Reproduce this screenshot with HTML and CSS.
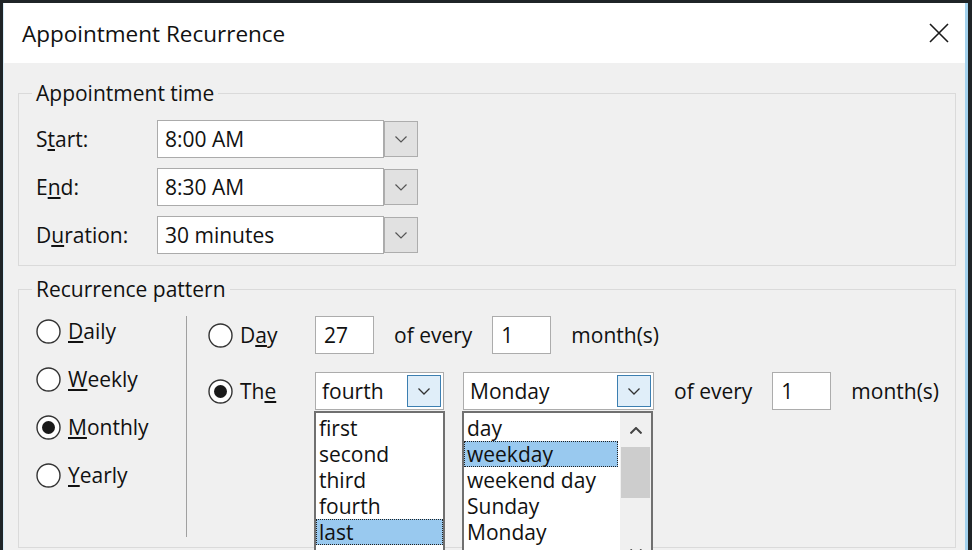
FILE: index.html
```html
<!DOCTYPE html>
<html lang="en">
<head>
  <meta charset="UTF-8">
  <meta name="viewport" content="width=device-width, initial-scale=1.0">
  <title>Appointment Recurrence</title>
  <link rel="stylesheet" href="styles.css">
</head>
<body>
  <div class="window">
    <div class="titlebar">
      <span class="title">Appointment Recurrence</span>
      <span class="close-btn">
        <svg width="20" height="20" viewBox="0 0 20 20"><path d="M1 1L19 19M19 1L1 19" stroke="#1a1a1a" stroke-width="1.6" fill="none"/></svg>
      </span>
    </div>

    <div class="content">
      <fieldset class="group time-group">
        <legend>Appointment time</legend>
        <div class="time-row">
          <label class="time-label">S<u>t</u>art:</label>
          <div class="time-box">8:00 AM</div>
          <div class="drop-btn">
            <svg width="12" height="7" viewBox="0 0 12 7"><path d="M0.5 0.5L6 6L11.5 0.5" stroke="#555" stroke-width="1.2" fill="none"/></svg>
          </div>
        </div>
        <div class="time-row">
          <label class="time-label">E<u>n</u>d:</label>
          <div class="time-box">8:30 AM</div>
          <div class="drop-btn">
            <svg width="12" height="7" viewBox="0 0 12 7"><path d="M0.5 0.5L6 6L11.5 0.5" stroke="#555" stroke-width="1.2" fill="none"/></svg>
          </div>
        </div>
        <div class="time-row">
          <label class="time-label">D<u>u</u>ration:</label>
          <div class="time-box">30 minutes</div>
          <div class="drop-btn">
            <svg width="12" height="7" viewBox="0 0 12 7"><path d="M0.5 0.5L6 6L11.5 0.5" stroke="#555" stroke-width="1.2" fill="none"/></svg>
          </div>
        </div>
      </fieldset>

      <fieldset class="group pattern-group">
        <legend>Recurrence pattern</legend>
        <div class="pattern">
          <div class="freq">
            <div class="opt">
              <svg class="radio" width="25" height="25" viewBox="0 0 25 25"><circle cx="12.5" cy="12.5" r="11.5" fill="#fff" stroke="#333" stroke-width="1.4"/></svg>
              <span><u>D</u>aily</span>
            </div>
            <div class="opt">
              <svg class="radio" width="25" height="25" viewBox="0 0 25 25"><circle cx="12.5" cy="12.5" r="11.5" fill="#fff" stroke="#333" stroke-width="1.4"/></svg>
              <span><u>W</u>eekly</span>
            </div>
            <div class="opt">
              <svg class="radio" width="25" height="25" viewBox="0 0 25 25"><circle cx="12.5" cy="12.5" r="11.5" fill="#fff" stroke="#333" stroke-width="1.4"/><circle cx="12.5" cy="12.5" r="6.5" fill="#1a1a1a"/></svg>
              <span><u>M</u>onthly</span>
            </div>
            <div class="opt">
              <svg class="radio" width="25" height="25" viewBox="0 0 25 25"><circle cx="12.5" cy="12.5" r="11.5" fill="#fff" stroke="#333" stroke-width="1.4"/></svg>
              <span><u>Y</u>early</span>
            </div>
          </div>

          <div class="monthly">
            <div class="month-row">
              <div class="opt opt-wide">
                <svg class="radio" width="25" height="25" viewBox="0 0 25 25"><circle cx="12.5" cy="12.5" r="11.5" fill="#fff" stroke="#333" stroke-width="1.4"/></svg>
                <span>D<u>a</u>y</span>
              </div>
              <div class="num-box">27</div>
              <span>of every</span>
              <div class="num-box">1</div>
              <span>month(s)</span>
            </div>

            <div class="month-row">
              <div class="opt opt-wide">
                <svg class="radio" width="25" height="25" viewBox="0 0 25 25"><circle cx="12.5" cy="12.5" r="11.5" fill="#fff" stroke="#333" stroke-width="1.4"/><circle cx="12.5" cy="12.5" r="6.5" fill="#1a1a1a"/></svg>
                <span>Th<u>e</u></span>
              </div>

              <div class="combo combo-ord">
                <span class="combo-text">fourth</span>
                <span class="combo-btn">
                  <svg width="12" height="7" viewBox="0 0 12 7"><path d="M0.5 0.5L6 6L11.5 0.5" stroke="#333" stroke-width="1.3" fill="none"/></svg>
                </span>
                <div class="droplist list-ord">
                  <ul>
                    <li>first</li>
                    <li>second</li>
                    <li>third</li>
                    <li>fourth</li>
                    <li class="selected">last</li>
                  </ul>
                </div>
              </div>

              <div class="combo combo-day">
                <span class="combo-text">Monday</span>
                <span class="combo-btn">
                  <svg width="12" height="7" viewBox="0 0 12 7"><path d="M0.5 0.5L6 6L11.5 0.5" stroke="#333" stroke-width="1.3" fill="none"/></svg>
                </span>
                <div class="droplist list-day">
                  <ul>
                    <li>day</li>
                    <li class="selected">weekday</li>
                    <li>weekend day</li>
                    <li>Sunday</li>
                    <li>Monday</li>
                  </ul>
                  <div class="scrollbar">
                    <div class="sb-btn">
                      <svg width="12" height="7" viewBox="0 0 12 7"><path d="M0.5 6.5L6 1L11.5 6.5" stroke="#444" stroke-width="2" fill="none"/></svg>
                    </div>
                    <div class="sb-track"><div class="sb-thumb"></div></div>
                    <div class="sb-btn">
                      <svg width="12" height="7" viewBox="0 0 12 7"><path d="M0.5 0.5L6 6L11.5 0.5" stroke="#444" stroke-width="2" fill="none"/></svg>
                    </div>
                  </div>
                </div>
              </div>

              <span>of every</span>
              <div class="num-box">1</div>
              <span>month(s)</span>
            </div>
          </div>
        </div>
      </fieldset>
    </div>
  </div>
</body>
</html>
```

FILE: styles.css
```css
html,
body {
  margin: 0;
  height: 550px;
  overflow: hidden;
}

body {
  font-family: "Open Sans", "Noto Sans", sans-serif;
  font-size: 21px;
  color: #111;
  background-color: #1f2427;
}

.window {
  margin: 3px 4px 0 3px;
  height: 547px;
  border-left: 1px solid #d6ecf8;
  border-right: 3px solid #a3d2ee;
  background-color: #f0f0f0;
}

/* Title bar */
.titlebar {
  height: 60px;
  display: flex;
  align-items: center;
  justify-content: space-between;
  padding: 0 16px 0 18px;
  background-color: #fff;
}

.title {
  font-size: 22.5px;
  color: #111;
}

.close-btn {
  display: flex;
  width: 20px;
  height: 20px;
}

/* Content */
.content {
  padding: 0 9px 0 14px;
}

.group {
  margin: 0;
  border: 1px solid #dadada;
  padding: 13px 8px 11px 17px;
  min-width: 0;
}

.group legend {
  margin-left: -4px;
  padding: 0 4px;
  line-height: 28px;
}

.time-group {
  margin-top: 16px;
}

.pattern-group {
  margin-top: 9px;
  padding-bottom: 10px;
}

/* Appointment time rows */
.time-row {
  display: flex;
  align-items: center;
  height: 38px;
}

.time-row + .time-row {
  margin-top: 10px;
}

.time-label {
  width: 121px;
}

.time-box {
  box-sizing: border-box;
  width: 227px;
  height: 38px;
  padding-left: 7px;
  line-height: 36px;
  background-color: #fff;
  border: 1px solid #ababab;
}

.drop-btn {
  box-sizing: border-box;
  width: 34px;
  height: 36px;
  display: flex;
  align-items: center;
  justify-content: center;
  background-color: #e1e1e1;
  border: 1px solid #adadad;
}

/* Recurrence pattern */
.pattern {
  display: flex;
  height: 221px;
}

.freq {
  width: 150px;
  display: flex;
  flex-direction: column;
  gap: 18px;
}

.opt {
  display: flex;
  align-items: center;
  gap: 7px;
  height: 30px;
}

.radio {
  flex-shrink: 0;
}

.monthly {
  flex: 1;
  border-left: 1px solid #a0a0a0;
  padding-left: 21px;
  display: flex;
  flex-direction: column;
  gap: 18px;
}

.month-row {
  display: flex;
  align-items: center;
  gap: 20px;
  height: 38px;
}

.opt-wide {
  width: 87px;
  height: 38px;
}

.num-box {
  box-sizing: border-box;
  width: 59px;
  height: 38px;
  padding-left: 8px;
  line-height: 36px;
  background-color: #fff;
  border: 1px solid #acacac;
}

.combo {
  position: relative;
  box-sizing: border-box;
  height: 38px;
  display: flex;
  align-items: center;
  justify-content: space-between;
  padding: 0 2px 0 6px;
  background-color: #fff;
  border: 1px solid #acacac;
}

.combo-ord {
  width: 129px;
}

.combo-day {
  width: 191px;
  margin-left: -1px;
}

.combo-btn {
  box-sizing: border-box;
  width: 34px;
  height: 32px;
  display: flex;
  align-items: center;
  justify-content: center;
  background-color: #e0eef9;
  border: 1px solid #3c7fb1;
}

/* Open drop-down lists */
.droplist {
  position: absolute;
  top: calc(100% + 2px);
  left: -2px;
  height: 160px;
  box-sizing: border-box;
  display: flex;
  background-color: #fff;
  border: 2px solid #707070;
}

.list-ord {
  width: 131px;
}

.list-day {
  width: 191px;
}

.droplist ul {
  flex: 1;
  list-style: none;
  margin: 0;
  padding: 2px 0 0;
}

.droplist li {
  height: 26px;
  line-height: 26px;
  padding-left: 3px;
  white-space: nowrap;
}

.droplist li.selected {
  background-color: #99c9ef;
  outline: 1px dotted #222;
  outline-offset: -1px;
}

.list-day ul {
  padding-right: 2px;
}

.scrollbar {
  width: 31px;
  display: flex;
  flex-direction: column;
  background-color: #f0f0f0;
}

.sb-btn {
  height: 34px;
  display: flex;
  align-items: center;
  justify-content: center;
}

.sb-track {
  flex: 1;
}

.sb-thumb {
  height: 51px;
  margin: 0 1px;
  background-color: #cdcdcd;
}
```
